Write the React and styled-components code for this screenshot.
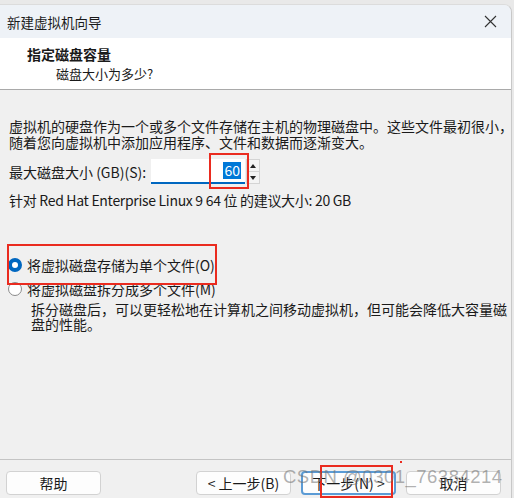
import React from "react";
import styled, { createGlobalStyle } from "styled-components";

const GlobalStyle = createGlobalStyle`
  html, body {
    margin: 0;
    padding: 0;
    background: #e9e9e9;
  }
  body {
    font-family: "Noto Sans CJK SC", "Noto Sans", "Liberation Sans", sans-serif;
    color: #1a1a1a;
  }
`;

const Stage = styled.div`
  position: relative;
  width: 514px;
  height: 498px;
  overflow: hidden;
  padding-top: 4px;
  box-sizing: border-box;
`;

const Window = styled.div`
  width: 512px;
  height: 494px;
  display: flex;
  flex-direction: column;
  background: #f0f0f0;
  border-right: 1px solid #c8c8c8;
  border-top: 1px solid #dcdcdc;
  border-top-right-radius: 8px;
  overflow: hidden;
  box-sizing: border-box;
`;

const TitleBar = styled.div`
  height: 33px;
  display: flex;
  align-items: center;
  justify-content: space-between;
  padding: 0 14px 0 7px;
  background: #eef2f7;
  font-size: 13.5px;
`;

const CloseIcon = styled.svg`
  width: 13px;
  height: 13px;
`;

const Header = styled.div`
  height: 52px;
  background: #fff;
  border-bottom: 1px solid #a9a9a9;
  padding-top: 7px;
  box-sizing: border-box;
`;

const HeaderTitle = styled.div`
  font-size: 14px;
  font-weight: 700;
  line-height: 18px;
  padding-left: 27px;
`;

const HeaderSub = styled.div`
  font-size: 13px;
  line-height: 18px;
  padding-left: 56px;
  margin-top: 2px;
`;

const Body = styled.div`
  flex: 1;
  padding: 28px 0 0 9px;
  font-size: 14px;
`;

const Paragraph = styled.div`
  line-height: 16px;
  white-space: nowrap;
`;

const SizeRow = styled.div`
  display: flex;
  align-items: center;
  margin-top: 9px;
  height: 25px;
`;

const SizeLabel = styled.span`
  width: 142px;
`;

const Input = styled.div`
  width: 94px;
  height: 25px;
  box-sizing: border-box;
  background: #fff;
  border-bottom: 2px solid #0067c0;
  display: flex;
  align-items: center;
  justify-content: flex-end;
  padding-right: 4px;
`;

const Selected = styled.span`
  background: #0078d7;
  color: #fff;
  line-height: 17px;
  padding: 0 1px;
`;

const Spinner = styled.div`
  width: 14px;
  height: 25px;
  display: flex;
  flex-direction: column;
  border: 1px solid #d4d4d4;
  box-sizing: border-box;
  margin-left: 1px;
`;

const SpinButton = styled.div`
  flex: 1;
  display: flex;
  align-items: center;
  justify-content: center;
  background: #f4f4f4;
  border-top: ${(p) => (p.$bottom ? "1px solid #d4d4d4" : "none")};
`;

const Arrow = styled.div`
  width: 0;
  height: 0;
  border-left: 3.5px solid transparent;
  border-right: 3.5px solid transparent;
  ${(p) =>
    p.$down ? "border-top: 4px solid #222;" : "border-bottom: 4px solid #222;"}
`;

const Recommend = styled.div`
  margin-top: 8px;
  line-height: 16px;
  letter-spacing: -0.3px;
`;

const RadioRow = styled.label`
  display: flex;
  align-items: center;
  height: 18px;
  margin-top: ${(p) => p.$gap}px;
  margin-left: -1px;
  gap: 5px;
`;

const RadioDot = styled.span`
  width: 14px;
  height: 14px;
  border-radius: 50%;
  box-sizing: border-box;
  flex: none;
  background: #fff;
  border: ${(p) => (p.$checked ? "4px solid #0067c0" : "1px solid #8a8a8a")};
`;

const Description = styled.div`
  margin-top: 4px;
  padding-left: 22px;
  line-height: 15px;
  white-space: nowrap;
`;

const Footer = styled.div`
  height: 39px;
  border-top: 1px solid #c4c4c4;
  box-sizing: border-box;
  display: flex;
  align-items: flex-start;
  padding: 11px 10px 0 6px;
`;

const Button = styled.button`
  width: 95px;
  height: 24px;
  font-family: inherit;
  font-size: 14px;
  color: #1a1a1a;
  background: #fdfdfd;
  border: ${(p) => (p.$focus ? "2px solid #5b9bd5" : "1px solid #d2d2d2")};
  border-radius: 4px;
  padding: 0;
  margin-left: ${(p) => p.$gap || 0}px;
  display: flex;
  align-items: center;
  justify-content: center;
`;

const Spacer = styled.div`
  flex: 1;
`;

const RedBox = styled.div`
  position: absolute;
  border: 2px solid #ea2b1f;
  box-sizing: border-box;
  pointer-events: none;
`;

const RedDot = styled.div`
  position: absolute;
  left: 400px;
  top: 461px;
  width: 2px;
  height: 2px;
  background: #ea2b1f;
`;

const Watermark = styled.div`
  position: absolute;
  left: 283px;
  top: 466px;
  font-family: "Liberation Sans", "DejaVu Sans", sans-serif;
  font-size: 18.5px;
  color: rgba(110, 110, 110, 0.55);
  letter-spacing: 0.5px;
  white-space: nowrap;
  pointer-events: none;
`;

export default function App() {
  return (
    <>
      <GlobalStyle />
      <Stage>
        <Window>
          <TitleBar>
            <span>新建虚拟机向导</span>
            <CloseIcon viewBox="0 0 13 13">
              <path d="M1 1 L12 12 M12 1 L1 12" stroke="#333" strokeWidth="1.1" fill="none" />
            </CloseIcon>
          </TitleBar>
          <Header>
            <HeaderTitle>指定磁盘容量</HeaderTitle>
            <HeaderSub>磁盘大小为多少?</HeaderSub>
          </Header>
          <Body>
            <Paragraph>虚拟机的硬盘作为一个或多个文件存储在主机的物理磁盘中。这些文件最初很小，</Paragraph>
            <Paragraph>随着您向虚拟机中添加应用程序、文件和数据而逐渐变大。</Paragraph>
            <SizeRow>
              <SizeLabel>最大磁盘大小 (GB)(S):</SizeLabel>
              <Input>
                <Selected>60</Selected>
              </Input>
              <Spinner>
                <SpinButton>
                  <Arrow />
                </SpinButton>
                <SpinButton $bottom>
                  <Arrow $down />
                </SpinButton>
              </Spinner>
            </SizeRow>
            <Recommend>针对 Red Hat Enterprise Linux 9 64 位 的建议大小: 20 GB</Recommend>
            <RadioRow $gap={48}>
              <RadioDot $checked />
              <span>将虚拟磁盘存储为单个文件(O)</span>
            </RadioRow>
            <RadioRow $gap={6}>
              <RadioDot />
              <span>将虚拟磁盘拆分成多个文件(M)</span>
            </RadioRow>
            <Description>
              拆分磁盘后，可以更轻松地在计算机之间移动虚拟机，但可能会降低大容量磁
              <br />
              盘的性能。
            </Description>
          </Body>
          <Footer>
            <Button>帮助</Button>
            <Spacer />
            <Button>&lt; 上一步(B)</Button>
            <Button $focus $gap={10}>下一步(N) &gt;</Button>
            <Button $gap={10}>取消</Button>
          </Footer>
        </Window>
        <RedBox style={{ left: 209, top: 153, width: 40, height: 36 }} />
        <RedBox style={{ left: 7, top: 244, width: 210, height: 41 }} />
        <RedBox style={{ left: 320, top: 465, width: 73, height: 33 }} />
        <RedDot />
        <Watermark>CSDN @0301_76384214</Watermark>
      </Stage>
    </>
  );
}
